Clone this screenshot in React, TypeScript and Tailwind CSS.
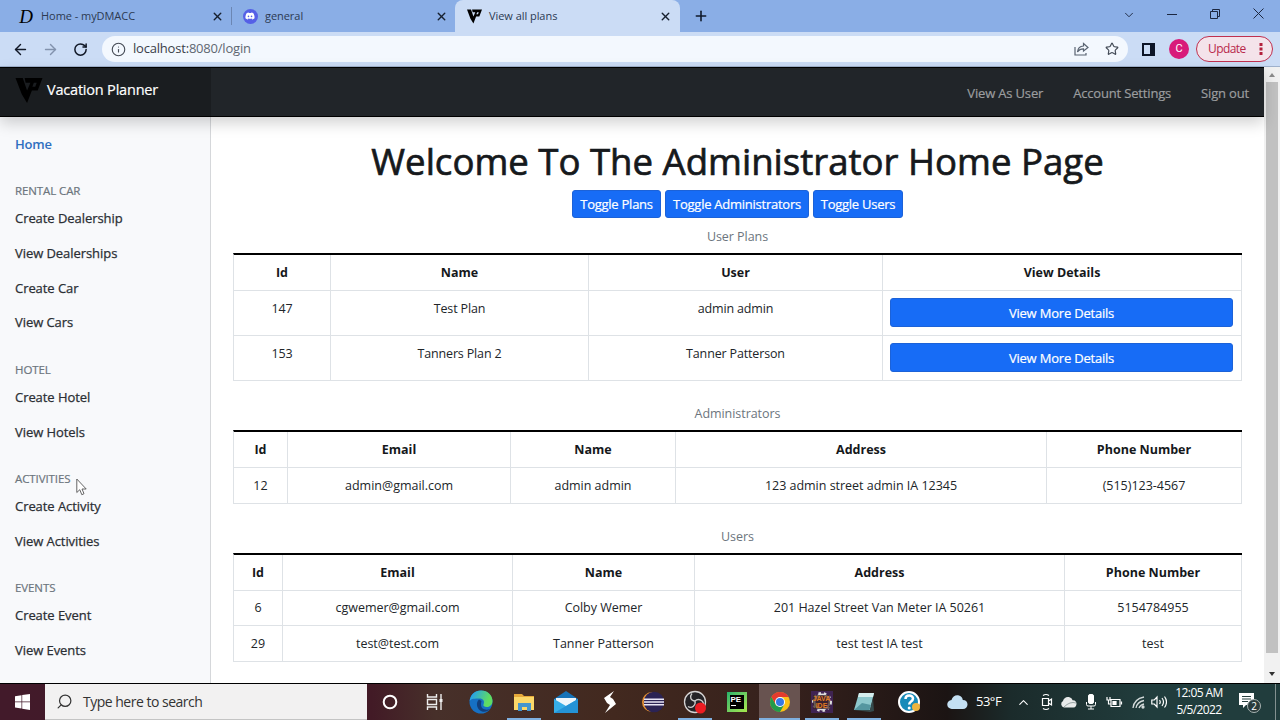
import type { ReactNode } from "react";
import { FaDiscord } from "react-icons/fa";
import { ArrowLeft, ArrowRight, ChevronDown, ChevronUp, Info, Plus, RotateCw, Search, Star, X } from "lucide-react";

interface Section {
  title: string;
  links: string[];
}

interface TableData {
  caption: string;
  spacing: string;
  columns: { label: string; width: string }[];
  rows: string[][];
  details?: boolean;
}

const SECTIONS: Section[] = [
  { title: "RENTAL CAR", links: ["Create Dealership", "View Dealerships", "Create Car", "View Cars"] },
  { title: "HOTEL", links: ["Create Hotel", "View Hotels"] },
  { title: "ACTIVITIES", links: ["Create Activity", "View Activities"] },
  { title: "EVENTS", links: ["Create Event", "View Events"] },
];

const TOGGLES = [
  { label: "Toggle Plans", width: "w-[89px]" },
  { label: "Toggle Administrators", width: "w-[144px]" },
  { label: "Toggle Users", width: "w-[90px]" },
];

const TABLES: TableData[] = [
  {
    caption: "User Plans",
    spacing: "mt-0",
    columns: [
      { label: "Id", width: "w-[97px]" },
      { label: "Name", width: "w-[258px]" },
      { label: "User", width: "w-[294px]" },
      { label: "View Details", width: "w-[359px]" },
    ],
    rows: [
      ["147", "Test Plan", "admin admin"],
      ["153", "Tanners Plan 2", "Tanner Patterson"],
    ],
    details: true,
  },
  {
    caption: "Administrators",
    spacing: "mt-[14px]",
    columns: [
      { label: "Id", width: "w-[54px]" },
      { label: "Email", width: "w-[223px]" },
      { label: "Name", width: "w-[165px]" },
      { label: "Address", width: "w-[371px]" },
      { label: "Phone Number", width: "w-[195px]" },
    ],
    rows: [["12", "admin@gmail.com", "admin admin", "123 admin street admin IA 12345", "(515)123-4567"]],
  },
  {
    caption: "Users",
    spacing: "mt-[14px]",
    columns: [
      { label: "Id", width: "w-[49px]" },
      { label: "Email", width: "w-[230px]" },
      { label: "Name", width: "w-[182px]" },
      { label: "Address", width: "w-[370px]" },
      { label: "Phone Number", width: "w-[177px]" },
    ],
    rows: [
      ["6", "cgwemer@gmail.com", "Colby Wemer", "201 Hazel Street Van Meter IA 50261", "5154784955"],
      ["29", "test@test.com", "Tanner Patterson", "test test IA test", "test"],
    ],
  },
];

function PlannerLogo({ className }: { className: string }) {
  return (
    <svg viewBox="0 0 28 28" className={className} fill="currentColor" fillRule="evenodd">
      <path d="M0 1h7.500l4.500 13 3.500-8h-5L9.500 1H28l-5 13h-6l-5 13L6.500 18zM19 6l-1.500 4h3L22 6z" />
    </svg>
  );
}

function Tab({ icon, title, box }: { icon: ReactNode; title: string; box: string }) {
  return (
    <div className={`flex h-8 shrink-0 items-center text-[#2c3a52] ${box}`}>
      <span className="flex w-4 justify-center">{icon}</span>
      <span className="ml-[7px] flex-1 whitespace-nowrap text-[11px] tracking-[-0.050px]">{title}</span>
      <X size={13} strokeWidth={2.6} className="text-[#16202f]" />
    </div>
  );
}

function BrowserChrome() {
  return (
    <header className="shrink-0">
      <div className="flex h-8 items-center bg-[#8aaee6]">
        <Tab
          box="w-[231px] pl-[18px] pr-[7px]"
          title="Home - myDMACC"
          icon={<span className="font-['Liberation_Serif',serif] text-[19px] italic leading-none text-black">D</span>}
        />
        <div className="h-[18px] w-px bg-[#6b86b3]" />
        <Tab
          box="w-[223px] pl-[10px] pr-[7px]"
          title="general"
          icon={
            <span className="flex h-[15px] w-[15px] items-center justify-center rounded-full bg-[#5560e6]">
              <FaDiscord size={10} color="white" />
            </span>
          }
        />
        <Tab
          box="w-[225px] rounded-t-lg bg-[#cbdcf5] pl-[11px] pr-[8px]"
          title="View all plans"
          icon={<PlannerLogo className="h-[15px] w-[15px] text-black" />}
        />
        <Plus size={16} strokeWidth={2.4} className="ml-[13px] text-[#101a2b]" />
        <div className="ml-auto flex items-center pr-[16px] text-[#1c2740]">
          <ChevronDown size={14} strokeWidth={1.6} className="mb-[3px] mr-[31px]" />
          <svg width="10" height="10" className="mr-[33px]" stroke="currentColor">
            <path d="M0 3.500h10" />
          </svg>
          <svg width="10" height="10" className="mb-[4px] mr-[33px]" fill="none" stroke="currentColor">
            <path d="M.500 2.500h7v7h-7zM2.500 2.500v-2h7v7h-2" />
          </svg>
          <svg width="11" height="11" className="mb-[5px]" fill="none" stroke="currentColor">
            <path d="M.500 .500l10 10M10.500 .500l-10 10" />
          </svg>
        </div>
      </div>

      <div className="flex h-[35px] items-center border-b border-[#9fb1cc] bg-[#cbdcf5] pl-3 pr-[7px]">
        <ArrowLeft size={17} strokeWidth={2} className="shrink-0 text-[#111827]" />
        <ArrowRight size={17} strokeWidth={2} className="ml-[13px] shrink-0 text-[#8292ad]" />
        <RotateCw size={15} strokeWidth={2.400} className="ml-[14px] shrink-0 text-[#111827]" />
        <div className="ml-[14px] flex h-[26px] w-[1026px] shrink-0 items-center rounded-full bg-[#f3f8fe] pl-[9px] pr-[9px]">
          <Info size={15} strokeWidth={1.8} className="text-[#454b55]" />
          <span className="ml-[7px] text-[13px] tracking-[-0.200px] text-[#5f6771]">
            <span className="text-[#3a4049]">localhost:</span>8080/login
          </span>
          <svg width="15" height="14" viewBox="0 0 15 14" className="ml-auto" fill="none" stroke="#596371" strokeWidth="1.200">
            <path d="M1 5v8h11v-2M9.500 1.500L14 5.500 9.500 9V6.800C7 6.800 5 7.500 3.500 10 3.800 6.500 6 4.200 9.500 4z" />
          </svg>
          <Star size={14} strokeWidth={2} className="ml-[16px] text-[#434b57]" />
        </div>
        <div className="ml-[14px] h-[13px] w-[13px] shrink-0 border-2 border-r-[5px] border-[#0d1527]" />
        <div className="ml-[14px] flex h-5 w-5 shrink-0 items-center justify-center rounded-full bg-[#d81b7a] font-[Roboto,sans-serif] text-[11px] text-white">
          C
        </div>
        <div className="ml-[7px] flex h-[26px] w-[77px] shrink-0 items-center rounded-full border border-[#c0304f] bg-[#f4e3ea] pl-[11px] text-[12px] text-[#b8284a]">
          <span className="w-[37px] tracking-[-0.600px]">Update</span>
          <svg width="4" height="14" className="ml-[14px]" fill="#b3203c">
            <path d="M.500 1h3v3h-3zM.500 5.500h3v3h-3zM.500 10h3v3h-3z" />
          </svg>
        </div>
      </div>
    </header>
  );
}

function Navbar() {
  return (
    <nav className="relative z-10 flex h-[50px] shrink-0 items-center border-y border-black bg-[#212529] shadow-[0_6px_14px_rgba(0,0,0,0.18)]">
      <div className="flex h-full w-[211px] bg-[#1a1d20] pl-[15px] pt-[9px]">
        <PlannerLogo className="h-[27px] w-[28px] text-black" />
        <span className="ml-[4px] mt-[2px] whitespace-nowrap text-[14.500px] leading-[22px] tracking-[-0.200px] text-white [-webkit-text-stroke:0.2px]">
          Vacation Planner
        </span>
      </div>
      <div className="ml-auto flex gap-[30px] pr-[15px] pt-[4px] text-[13px] tracking-[-0.170px] text-[#9b9d9f] [-webkit-text-stroke:0.2px]">
        <span>View As User</span>
        <span>Account Settings</span>
        <span>Sign out</span>
      </div>
    </nav>
  );
}

function Sidebar() {
  return (
    <aside className="w-[211px] shrink-0 border-r border-[#d5d7da] bg-[#f8f9fb] pl-[15px] pt-[10px] text-[13px] text-[#2b2f34]">
      <div className="h-[34.400px] font-semibold leading-[35px] tracking-[-0.200px] text-[#2f6fc0]">Home</div>
      {SECTIONS.map((section) => (
        <div key={section.title}>
          <h6 className="h-[39.900px] pt-[18.500px] text-[11.500px] font-normal leading-[21px] tracking-[-0.100px] text-[#6c757d] [-webkit-text-stroke:0.2px]">
            {section.title}
          </h6>
          {section.links.map((link) => (
            <a key={link} className="block h-[34.700px] leading-[34.700px] tracking-[-0.060px] [-webkit-text-stroke:0.25px]">
              {link}
            </a>
          ))}
        </div>
      ))}
    </aside>
  );
}

function DataTable({ table }: { table: TableData }) {
  return (
    <div className={table.spacing}>
      <div className="h-[35px] text-center text-[12.500px] leading-[37px] tracking-[-0.050px] text-[#6c757d]">
        {table.caption}
      </div>
      <table className="w-[1009px] table-fixed border-separate border-spacing-0 border-l border-t-2 border-l-[#dee2e6] border-t-black text-center text-[12.500px] text-[#212529]">
        <thead>
          <tr>
            {table.columns.map((column) => (
              <th
                key={column.label}
                className={`h-9 border-b border-r border-[#dee2e6] p-0 pt-[2px] font-bold text-[#15181b] ${column.width}`}
              >
                {column.label}
              </th>
            ))}
          </tr>
        </thead>
        <tbody>
          {table.rows.map((row) => (
            <tr key={row[0]}>
              {row.map((cell, i) => (
                <td
                  key={i}
                  className={`border-b border-r border-[#dee2e6] p-0 ${
                    table.details ? "h-[45px] pt-[8px] align-top leading-[20px] tracking-[-0.150px]" : "h-[35.500px] pt-[2px] tracking-[-0.020px]"
                  }`}
                >
                  {cell}
                </td>
              ))}
              {table.details && (
                <td className="h-[45px] border-b border-r border-[#dee2e6] p-0 pb-px pl-[7px] pr-[8px]">
                  <button className="block h-[29px] w-full rounded-[3px] border border-[#1c62d8] bg-[#176cf6] pt-px text-[13px] leading-none tracking-[-0.200px] text-white [-webkit-text-stroke:0.2px]">
                    View More Details
                  </button>
                </td>
              )}
            </tr>
          ))}
        </tbody>
      </table>
    </div>
  );
}

function Scrollbar() {
  return (
    <div className="flex w-4 shrink-0 flex-col items-center bg-[#f1f1f1]">
      <svg width="8" height="15" fill="#8b8b8b">
        <path d="M1 10l3-4 3 4z" />
      </svg>
      <div className="h-[571px] w-[12px] bg-[#c1c1c1]" />
      <svg width="8" height="8" className="mt-[17px]" fill="#303030">
        <path d="M1 2h6L4 6z" />
      </svg>
    </div>
  );
}

function TaskIcon({ children, width, open, active }: { children: ReactNode; width: string; open?: boolean; active?: boolean }) {
  return (
    <div className={`relative flex h-full shrink-0 items-center justify-center ${width} ${active ? "bg-[#685350]" : ""}`}>
      {children}
      {open && <div className={`absolute bottom-0 h-[2px] bg-[#7fb0e0] ${active ? "w-full" : "w-[34px]"}`} />}
    </div>
  );
}

function Taskbar() {
  return (
    <footer className="flex h-[37px] shrink-0 border-t border-black bg-[linear-gradient(90deg,#421a2a_0%,#421a26_29%,#47302a_34%,#42291f_48%,#35201c_62%,#1b1413_74%,#1b2b2b_79%,#213d3d_90%)] text-white">
      <div className="flex w-[45px] items-center justify-center">
        <svg width="15" height="16" viewBox="0 0 15 16" fill="white">
          <path d="M0 2.200L6.500 1.200V7.500H0zM7.200 1.100L15 0V7.500H7.200zM0 8.300h6.500v6.200L0 13.600zM7.200 8.300H15V16L7.200 14.700z" />
        </svg>
      </div>
      <div className="flex w-[322px] items-center border-b border-[#c4c4c4] bg-[#f2f1f1] pl-[11px] text-[#333]">
        <Search size={17} strokeWidth={1.700} className="-scale-x-100" />
        <span className="ml-[10px] text-[14px] tracking-[-0.500px]">Type here to search</span>
      </div>
      <TaskIcon width="w-[45px]">
        <svg width="16" height="16" fill="none" stroke="white" strokeWidth="2">
          <circle cx="8" cy="8" r="6.300" />
        </svg>
      </TaskIcon>
      <TaskIcon width="w-[45px]">
        <svg width="18" height="16" fill="none" stroke="#eee" strokeWidth="1.400">
          <path d="M1.500 0v3h9V0M1.500 5.500h9v5h-9zM1.500 16v-3h9v3M15 0v16" />
          <path d="M13.500 5h3v3h-3z" fill="#eee" stroke="none" />
        </svg>
      </TaskIcon>
      <TaskIcon width="w-[47px]">
        <svg width="24" height="24" viewBox="0 0 24 24">
          <defs>
            <linearGradient id="edge" x1="0" y1="0" x2="1" y2="0.300">
              <stop offset="0.200" stopColor="#2aa5e0" />
              <stop offset="0.900" stopColor="#5fdc62" />
            </linearGradient>
          </defs>
          <circle cx="12" cy="12" r="11.500" fill="#1670c4" />
          <path d="M.700 11C1.500 4.500 6 .500 12 .500c7 0 11.500 5 11.500 10.500 0 3.500-2.500 6-5.500 6-2.500 0-4.200-1-3.500-2.500 1.500-3.500-.500-6-4-6C6 8.500 2 8.500.700 11z" fill="url(#edge)" />
          <path d="M10 9.500c-3.500 3-2.500 10 3 12 3 .800 6-.300 8-2.500-4 1.500-9 .500-9-4.500 0-2 .500-3 .500-3.500z" fill="#123f7c" />
        </svg>
      </TaskIcon>
      <TaskIcon width="w-[39px]" open>
        <svg width="22" height="20" viewBox="0 0 22 20">
          <path d="M1 2h8l2 2h10v14H1z" fill="#e6a93a" />
          <path d="M1 5h20v13H1z" fill="#fbd869" />
          <path d="M5 11h13v8h-4v-4H9v4H5z" fill="#4596ce" />
        </svg>
      </TaskIcon>
      <TaskIcon width="w-[46px]">
        <svg width="24" height="22" viewBox="0 0 24 22">
          <path d="M0 8L12 0l12 8v14H0z" fill="#1673b8" />
          <path d="M2 7h20v10H2z" fill="#eef6fb" />
          <path d="M0 8l12 7 12-7v14H0z" fill="#36aee8" />
          <path d="M0 22L24 8v14z" fill="#2493d6" />
        </svg>
      </TaskIcon>
      <TaskIcon width="w-[42px]">
        <svg width="14" height="22" viewBox="0 0 14 22" fill="white">
          <path d="M11 0L1 7l3 5 3 2-5 8 11-9-3-5-3-2z" />
        </svg>
      </TaskIcon>
      <TaskIcon width="w-[43px]">
        <svg width="24" height="22" viewBox="0 0 24 22">
          <circle cx="11" cy="11" r="10" fill="#e99332" />
          <circle cx="13" cy="11" r="10.300" fill="#2b2354" />
          <path d="M3 8.200h20M3 11h20M3 13.800h20" stroke="#e9e6f5" strokeWidth="1.600" />
        </svg>
      </TaskIcon>
      <TaskIcon width="w-[42px]" open>
        <svg width="24" height="24" viewBox="0 0 24 24">
          <circle cx="12" cy="12" r="10.500" fill="#252327" stroke="#d5d3d3" strokeWidth="1.300" />
          <g fill="none" stroke="#cfcdcd" strokeWidth="1.300">
            <path d="M12 11C8 11 6 7 9 3.500M12 11c3-3 8-1 8.500 3M12 11c1 4-3 8-7 5.500" />
          </g>
          <circle cx="17.500" cy="18" r="5.500" fill="#ec1c22" />
        </svg>
      </TaskIcon>
      <TaskIcon width="w-[43px]">
        <div className="-ml-[2px] h-5 w-5 bg-linear-to-br from-[#1fb36a] to-[#a6e84b] p-[3px]">
          <div className="h-[14px] w-[14px] bg-black pl-px pt-px font-['Liberation_Sans',sans-serif] text-[8px] font-bold leading-[8px]">
            PE
            <div className="mt-px h-px w-[5px] bg-white" />
          </div>
        </div>
      </TaskIcon>
      <TaskIcon width="w-[41px]" open active>
        <svg width="20" height="20" viewBox="0 0 20 20">
          <circle cx="10" cy="10" r="10" fill="#fbc116" />
          <path d="M1.340 5A10 10 0 0 1 18.660 5H10L5.670 12.500z" fill="#e33b2e" />
          <path d="M1.340 5A10 10 0 0 0 10 20l4.330-7.500H5.670z" fill="#229a4b" />
          <circle cx="10" cy="10" r="5" fill="white" />
          <circle cx="10" cy="10" r="4" fill="#3578e5" />
        </svg>
      </TaskIcon>
      <TaskIcon width="w-[43px]" open>
        <div className="relative flex h-[22px] w-[22px] items-center justify-center bg-[#3f2352]">
          <svg width="20" height="20" className="absolute" fill="none" stroke="#ddd">
            <circle cx="10" cy="10" r="7.500" strokeWidth="2" />
            <circle cx="10" cy="10" r="9" strokeWidth="2" strokeDasharray="2.500 3" />
          </svg>
          <span className="relative bg-[#37221f]/70 text-center font-['Liberation_Sans',sans-serif] text-[7px] font-bold leading-[7px] text-[#e07b22]">
            JAVA
            <br />
            IDE
          </span>
        </div>
      </TaskIcon>
      <TaskIcon width="w-[41px]" open>
        <svg width="22" height="22" viewBox="0 0 22 22">
          <path d="M6 2h15l-4 17H1z" fill="#8dc7cc" />
          <path d="M6 2h15l-1 4H5z" fill="#d6eeee" />
          <path d="M9 12l9 2-1.500 5H1z" fill="#5596a0" />
          <path d="M1 19h16l3-12 1 13-4 1z" fill="#354b4d" />
        </svg>
      </TaskIcon>
      <TaskIcon width="w-[49px]">
        <svg width="24" height="24" viewBox="0 0 24 24">
          <circle cx="12" cy="12" r="10" fill="#178bb9" stroke="white" strokeWidth="2" />
          <path d="M8.500 9c0-5 7.500-4.500 7.500-.500 0 3-3.800 3-3.800 6" fill="none" stroke="white" strokeWidth="2.500" />
          <circle cx="12.200" cy="18" r="1.500" fill="white" />
          <circle cx="19" cy="17" r="4" fill="#edb43d" />
        </svg>
      </TaskIcon>

      <div className="flex flex-1 items-center pl-[14px]">
        <svg width="21" height="16" viewBox="0 0 21 16">
          <path d="M5 15a4.500 4.500 0 0 1-.500-9C5.500 2 9 .500 12 1.500c2.500.800 3.500 2.500 3.800 4.500C19 6 20.500 8 20.500 10.500S18.500 15 16 15z" fill="#c4e0f3" />
        </svg>
        <span className="ml-[8px] w-[27px] text-[13px] tracking-[-0.500px]">53°F</span>
        <ChevronUp size={15} strokeWidth={1.700} className="ml-[13px]" />
        <svg width="14" height="18" className="ml-[9px]" fill="none" stroke="white" strokeWidth="1.200">
          <path d="M2.500 5.500h6v7h-6zM8.500 8l3-2v6l-3-2M3 2.500q3-2 6 0M3 15.500q3 2 6 0" />
        </svg>
        <svg width="17" height="12" viewBox="0 0 17 12" className="ml-[6px]" fill="#e8eaea">
          <path d="M4 11.500A3.500 3.500 0 0 1 3 5c.500-3 4-5 7-3.500C11.500 2 12 3 12.500 4.200c3-.200 4 2 4 3.500s-1 3.800-3 3.800z" />
          <path d="M4 11q6-6 12-4" fill="none" stroke="#98a4a4" />
        </svg>
        <svg width="12" height="16" className="ml-[8px]" fill="white" stroke="white">
          <rect x="3.500" y=".500" width="5" height="9" rx="1.500" />
          <path d="M1.500 8v2.500q0 1.500 1.500 1.500h6q1.500 0 1.500-1.500V8M6 12v3M3 15h6" fill="none" />
        </svg>
        <svg width="17" height="13" className="ml-[9px]" fill="none" stroke="white" strokeWidth="1.200">
          <path d="M5 3.500h9v7H5zM15.500 5.500v3M1 1v3h3V1M2.500 4v4h3" />
          <path d="M7 5.500h3v3H7z" fill="white" />
        </svg>
        <svg width="13" height="13" className="ml-[9px]" fill="none" stroke="#d3dada" strokeWidth="1.300">
          <path d="M1 12Q2 3 12 1M4 12Q5 6 12 4.500M7 12Q8 9 12 8" />
          <circle cx="11" cy="11" r="1" fill="white" />
        </svg>
        <svg width="16" height="14" className="ml-[6px]" fill="none" stroke="white" strokeWidth="1.200">
          <path d="M.800 5h2.500L6 2v10L3.300 9H.800zM8.500 5q1.500 2 0 4M11 3q3 4 0 8M13.500 1.500q4 5.500 0 11" />
        </svg>
        <div className="ml-[8px] w-[48px] whitespace-nowrap pb-[2px] text-center text-[12px] leading-[17px] tracking-[-0.600px]">
          <div>12:05 AM</div>
          <div>5/5/2022</div>
        </div>
        <div className="relative ml-[15px] h-[22px] w-[24px]">
          <svg width="18" height="18" fill="white">
            <path d="M1 2h15v12H8l-3 3v-3H1z" />
            <path d="M4 5.500h9M4 8h9M4 10.500h6" stroke="#27403f" />
          </svg>
          <span className="absolute left-[9px] top-[8px] flex h-[14px] w-[14px] items-center justify-center rounded-full border border-[#a9b4b3] bg-[#2a3b3b] text-[10px] leading-none">
            2
          </span>
        </div>
      </div>
      <div className="w-[5px] shrink-0 border-l border-[#839190]" />
    </footer>
  );
}

export default function App() {
  return (
    <div className="relative flex h-[720px] w-[1280px] flex-col overflow-hidden bg-white font-['Open_Sans','Noto_Sans',sans-serif]">
      <BrowserChrome />
      <div className="flex h-[616px] shrink-0">
        <div className="flex w-[1264px] flex-col">
          <Navbar />
          <div className="flex min-h-0 flex-1">
            <Sidebar />
            <main className="flex-1 pl-[22px] pr-[22px] pt-[20px]">
              <h1 className="whitespace-nowrap text-center text-[36.600px] leading-[48px] text-[#16191c] [-webkit-text-stroke:0.7px]">
                Welcome To The Administrator Home Page
              </h1>
              <div className="mt-[5px] flex justify-center gap-1">
                {TOGGLES.map((toggle) => (
                  <button
                    key={toggle.label}
                    className={`h-[28px] whitespace-nowrap rounded-[3px] border border-[#1c62d8] bg-[#176cf6] text-[13px] leading-none tracking-[-0.250px] text-white [-webkit-text-stroke:0.2px] ${toggle.width}`}
                  >
                    {toggle.label}
                  </button>
                ))}
              </div>
              {TABLES.map((table) => (
                <DataTable key={table.caption} table={table} />
              ))}
            </main>
          </div>
        </div>
        <Scrollbar />
      </div>
      <Taskbar />
      <svg width="12" height="18" viewBox="0 0 12 18" className="absolute left-[76px] top-[478px] z-20">
        <path d="M.800 1v13.500l3-2.800 2 5 2.200-1-2-4.700h4.200z" fill="white" stroke="#555" strokeWidth=".900" />
      </svg>
    </div>
  );
}
